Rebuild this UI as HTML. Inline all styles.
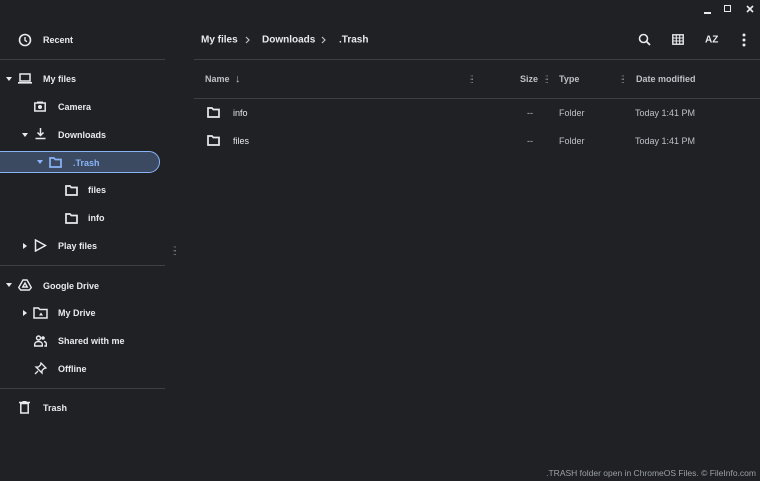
<!DOCTYPE html>
<html><head><style>
body{margin:0;width:760px;height:481px;background:#202124;font-family:"Liberation Sans",sans-serif;color:#e8eaed;position:relative;overflow:hidden}
.a{position:absolute;white-space:nowrap}
.t{font-size:9px;font-weight:bold;transform:translateY(-50%)}
.s{font-size:9px;transform:translateY(-50%)}
.hr{position:absolute;height:1px;background:#3c4043}
svg{position:absolute}
.tri{position:absolute;width:0;height:0}
.dn{border-left:3px solid transparent;border-right:3px solid transparent;border-top:4px solid #e8eaed}
.rt{border-top:3px solid transparent;border-bottom:3px solid transparent;border-left:4px solid #e8eaed}
.g{font-size:8px;color:#9aa0a6;letter-spacing:-1px}
</style></head><body>
<div class="a" style="left:704px;top:12px;width:7px;height:2px;background:#e8eaed"></div>
<div class="a" style="left:724px;top:5px;width:5px;height:5px;border:1.5px solid #e8eaed"></div>
<svg style="left:746px;top:5px" width="8" height="8" viewBox="0 0 8 8"><path d="M1 1l6 6M7 1l-6 6" stroke="#e8eaed" stroke-width="1.6"/></svg>

<svg style="left:18px;top:33px" width="14" height="14" viewBox="0 0 14 14"><circle cx="7" cy="7" r="5.5" fill="none" stroke="#e8eaed" stroke-width="1.6"/><path d="M7 4v3.3l2 1.5" fill="none" stroke="#e8eaed" stroke-width="1.4"/></svg>
<div class="a t" style="left:43px;top:40px">Recent</div>
<div class="hr" style="left:0;top:59px;width:165px"></div>

<div class="tri dn" style="left:6px;top:77px"></div>
<svg style="left:18px;top:73px" width="14" height="12" viewBox="0 0 14 12"><rect x="2" y="1" width="10" height="7" fill="none" stroke="#e8eaed" stroke-width="1.5"/><rect x="0" y="9" width="14" height="1.6" fill="#e8eaed"/></svg>
<div class="a t" style="left:43px;top:79px">My files</div>

<svg style="left:34px;top:101px" width="12" height="11" viewBox="0 0 12 11"><rect x="0.8" y="2" width="10.4" height="8" fill="none" stroke="#e8eaed" stroke-width="1.5"/><rect x="3" y="0.5" width="6" height="2" fill="#e8eaed"/><circle cx="6" cy="6" r="2" fill="#e8eaed"/></svg>
<div class="a t" style="left:58px;top:107px">Camera</div>

<div class="tri dn" style="left:22px;top:133px"></div>
<svg style="left:35px;top:128px" width="11" height="12" viewBox="0 0 11 12"><path d="M5.5 0v7M2.5 4.5l3 3 3-3M0.5 10.5h10" fill="none" stroke="#e8eaed" stroke-width="1.5"/></svg>
<div class="a t" style="left:58px;top:135px">Downloads</div>

<div class="a" style="left:-10px;top:151px;width:168px;height:20px;background:#3b4a61;border:1.5px solid #8ab4f8;border-radius:0 12px 12px 0"></div>
<div class="tri dn" style="left:37px;top:160px;border-top-color:#8ab4f8"></div>
<svg style="left:49px;top:157px" width="13" height="11" viewBox="0 0 13 11"><path d="M1 1h4l1.3 1.5H12V10H1z" fill="none" stroke="#8ab4f8" stroke-width="1.7"/></svg>
<div class="a t" style="left:73px;top:163px;color:#8ab4f8">.Trash</div>

<svg style="left:65px;top:185px" width="13" height="11" viewBox="0 0 13 11"><path d="M1 1h4l1.3 1.5H12V10H1z" fill="none" stroke="#e8eaed" stroke-width="1.7"/></svg>
<div class="a t" style="left:88px;top:190px">files</div>
<svg style="left:65px;top:213px" width="13" height="11" viewBox="0 0 13 11"><path d="M1 1h4l1.3 1.5H12V10H1z" fill="none" stroke="#e8eaed" stroke-width="1.7"/></svg>
<div class="a t" style="left:88px;top:218px">info</div>

<div class="tri rt" style="left:23px;top:243px"></div>
<svg style="left:34px;top:239px" width="13" height="13" viewBox="0 0 13 13"><path d="M1.5 1v11l10-5.5z" fill="none" stroke="#e8eaed" stroke-width="1.5"/></svg>
<div class="a t" style="left:58px;top:246px">Play files</div>
<div class="a g" style="left:173px;top:247px;line-height:4px">::<br>::</div>

<div class="hr" style="left:0;top:265px;width:165px"></div>
<div class="tri dn" style="left:6px;top:283px"></div>
<svg style="left:18px;top:279px" width="14" height="12" viewBox="0 0 14 12"><path d="M5 1h4l4.3 7.5-2 2.5H2.7l-2-2.5z M7 4l2.3 4H4.7z" fill="none" stroke="#e8eaed" stroke-width="1.4"/></svg>
<div class="a t" style="left:43px;top:286px">Google Drive</div>

<div class="tri rt" style="left:23px;top:310px"></div>
<svg style="left:33px;top:307px" width="15" height="12" viewBox="0 0 15 12"><path d="M1 1h4.5l1.3 1.5H14V11H1z" fill="none" stroke="#e8eaed" stroke-width="1.5"/><path d="M8 5.5l2 3H6z" fill="#e8eaed"/></svg>
<div class="a t" style="left:58px;top:313px">My Drive</div>

<svg style="left:34px;top:335px" width="13" height="12" viewBox="0 0 13 12"><circle cx="4.5" cy="3" r="2" fill="none" stroke="#e8eaed" stroke-width="1.4"/><circle cx="9" cy="3" r="1.8" fill="#e8eaed"/><path d="M0.7 11V9c0-1.5 2-2.5 3.8-2.5S8.3 7.5 8.3 9v2zM10 6.5c1.3 0.2 2.3 1 2.3 2.3V11h-2" fill="none" stroke="#e8eaed" stroke-width="1.4"/></svg>
<div class="a t" style="left:58px;top:341px">Shared with me</div>

<svg style="left:34px;top:362px" width="13" height="13" viewBox="0 0 13 13"><path d="M7 1l5 5-2 0.5-2 2 0 2.5-6-6 2.5 0 2-2z M4 9l-3 3" fill="none" stroke="#e8eaed" stroke-width="1.3"/></svg>
<div class="a t" style="left:58px;top:369px">Offline</div>

<div class="hr" style="left:0;top:388px;width:165px"></div>
<svg style="left:19px;top:401px" width="11" height="13" viewBox="0 0 11 13"><path d="M0 1.5h11M3.5 0.5h4M1.8 2.5h7.4V12H1.8z" fill="none" stroke="#e8eaed" stroke-width="1.5"/></svg>
<div class="a t" style="left:43px;top:408px">Trash</div>

<div class="a t" style="left:201px;top:40px;font-size:10px">My files</div>
<svg style="left:245px;top:36px" width="5" height="8" viewBox="0 0 5 8"><path d="M1 1l3 3-3 3" fill="none" stroke="#bdc1c6" stroke-width="1.2"/></svg>
<div class="a t" style="left:262px;top:40px;font-size:10px">Downloads</div>
<svg style="left:321px;top:36px" width="5" height="8" viewBox="0 0 5 8"><path d="M1 1l3 3-3 3" fill="none" stroke="#bdc1c6" stroke-width="1.2"/></svg>
<div class="a t" style="left:339px;top:40px;font-size:10px">.Trash</div>

<svg style="left:638px;top:33px" width="13" height="13" viewBox="0 0 13 13"><circle cx="5.5" cy="5.5" r="4" fill="none" stroke="#e8eaed" stroke-width="1.6"/><path d="M8.5 8.5l3.5 3.5" stroke="#e8eaed" stroke-width="1.8"/></svg>
<svg style="left:672px;top:34px" width="12" height="11" viewBox="0 0 12 11"><rect x="0.8" y="0.8" width="10.4" height="9.4" fill="none" stroke="#e8eaed" stroke-width="1.4"/><path d="M4.3 1v9M7.7 1v9M1 4h10M1 7h10" stroke="#e8eaed" stroke-width="1.1"/></svg>
<div class="a t" style="left:705px;top:40px;font-size:10px">AZ</div>
<svg style="left:742px;top:33px" width="4" height="14" viewBox="0 0 4 14"><circle cx="2" cy="2" r="1.5" fill="#e8eaed"/><circle cx="2" cy="7" r="1.5" fill="#e8eaed"/><circle cx="2" cy="12" r="1.5" fill="#e8eaed"/></svg>
<div class="hr" style="left:194px;top:59px;width:566px"></div>

<div class="a t" style="left:205px;top:79px;color:#bdc1c6;font-weight:bold">Name</div>
<div class="a s" style="left:235px;top:79px;color:#bdc1c6;font-size:11px">↓</div>
<div class="a g" style="left:470px;top:76px;line-height:3px">::<br>::</div>
<div class="a t" style="left:520px;top:79px;color:#bdc1c6">Size</div>
<div class="a g" style="left:545px;top:76px;line-height:3px">::<br>::</div>
<div class="a t" style="left:559px;top:79px;color:#bdc1c6">Type</div>
<div class="a g" style="left:621px;top:76px;line-height:3px">::<br>::</div>
<div class="a t" style="left:636px;top:79px;color:#bdc1c6">Date modified</div>
<div class="hr" style="left:194px;top:98px;width:566px"></div>

<svg style="left:207px;top:107px" width="13" height="11" viewBox="0 0 13 11"><path d="M1 1h4l1.3 1.5H12V10H1z" fill="none" stroke="#e8eaed" stroke-width="1.7"/></svg>
<div class="a s" style="left:233px;top:113px">info</div>
<div class="a s" style="left:527px;top:113px;color:#bdc1c6">--</div>
<div class="a s" style="left:559px;top:113px;color:#bdc1c6">Folder</div>
<div class="a s" style="left:635px;top:113px;color:#bdc1c6">Today 1:41 PM</div>

<svg style="left:207px;top:135px" width="13" height="11" viewBox="0 0 13 11"><path d="M1 1h4l1.3 1.5H12V10H1z" fill="none" stroke="#e8eaed" stroke-width="1.7"/></svg>
<div class="a s" style="left:233px;top:141px">files</div>
<div class="a s" style="left:527px;top:141px;color:#bdc1c6">--</div>
<div class="a s" style="left:559px;top:141px;color:#bdc1c6">Folder</div>
<div class="a s" style="left:635px;top:141px;color:#bdc1c6">Today 1:41 PM</div>

<div class="a" style="right:4px;top:468px;font-size:8.5px;color:#9aa0a6">.TRASH folder open in ChromeOS Files. © FileInfo.com</div>
</body></html>
